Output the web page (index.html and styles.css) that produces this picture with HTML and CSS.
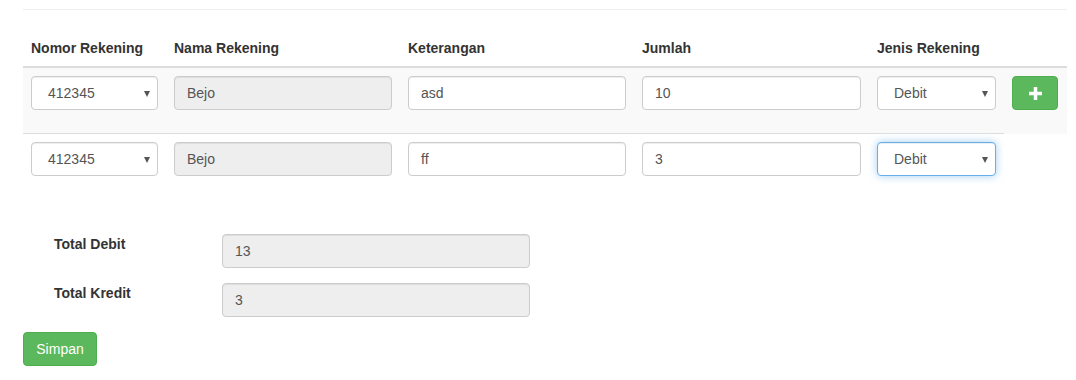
FILE: index.html
```html
<!DOCTYPE html>
<html>
<head>
<meta charset="utf-8">
<link rel="stylesheet" href="styles.css">
</head>
<body>
<div class="wrap">
  <hr class="rule">
  <table class="jt">
    <colgroup>
      <col class="c1"><col class="c2"><col class="c3"><col class="c4"><col class="c5"><col class="c6">
    </colgroup>
    <thead>
      <tr>
        <th>Nomor Rekening</th>
        <th>Nama Rekening</th>
        <th>Keterangan</th>
        <th>Jumlah</th>
        <th>Jenis Rekening</th>
        <th></th>
      </tr>
    </thead>
    <tbody>
      <tr class="striped">
        <td><div class="fg"><div class="sel">412345</div></div></td>
        <td><div class="fg"><div class="inp ro">Bejo</div></div></td>
        <td><div class="fg"><div class="inp">asd</div></div></td>
        <td><div class="fg"><div class="inp">10</div></div></td>
        <td><div class="fg"><div class="sel">Debit</div></div></td>
        <td><div class="fg"><div class="btn btn-add"><svg width="13" height="13" viewBox="0 0 13 13"><rect x="4.75" y="0" width="3.5" height="13" fill="#fff"/><rect x="0" y="4.75" width="13" height="3.5" fill="#fff"/></svg></div></div></td>
      </tr>
      <tr>
        <td><div class="fg"><div class="sel">412345</div></div></td>
        <td><div class="fg"><div class="inp ro">Bejo</div></div></td>
        <td><div class="fg"><div class="inp">ff</div></div></td>
        <td><div class="fg"><div class="inp">3</div></div></td>
        <td><div class="fg"><div class="sel focus">Debit</div></div></td>
      </tr>
    </tbody>
  </table>

  <div class="totals">
    <div class="trow">
      <label class="tlabel">Total Debit</label>
      <div class="inp ro tinp">13</div>
    </div>
    <div class="trow">
      <label class="tlabel">Total Kredit</label>
      <div class="inp ro tinp">3</div>
    </div>
  </div>
  <div class="btn btn-save">Simpan</div>
</div>
</body>
</html>
```

FILE: styles.css
```css
* { box-sizing: border-box; }
html, body { margin: 0; padding: 0; background: #fff; }
body {
  font-family: "Liberation Sans", Arial, sans-serif;
  font-size: 14px;
  line-height: 20px;
  color: #333;
}
.wrap {
  width: 1067px;
  padding-left: 23px;
}
.rule {
  margin: 9px 0 20px 0;
  border: 0;
  border-top: 1px solid #eee;
  height: 0;
}
.jt {
  width: 1044px;
  border-collapse: collapse;
  border-spacing: 0;
  table-layout: fixed;
}
.c1 { width: 143px; }
.c2 { width: 234px; }
.c3 { width: 234px; }
.c4 { width: 235px; }
.c5 { width: 135px; }
.c6 { width: 63px; }
.jt th {
  text-align: left;
  font-weight: bold;
  padding: 8px;
  line-height: 20px;
  border-bottom: 2px solid #ddd;
  vertical-align: bottom;
}
.jt td {
  padding: 8px;
  vertical-align: top;
  border-top: 1px solid #ddd;
}
.jt thead + tbody tr:first-child td { border-top: 0; }
.striped td { background: #f9f9f9; }
.fg { margin-bottom: 15px; }
.inp, .sel {
  height: 34px;
  width: 100%;
  border: 1px solid #ccc;
  border-radius: 4px;
  background: #fff;
  color: #555;
  font-size: 14px;
  line-height: 20px;
  padding: 6px 12px;
  box-shadow: inset 0 1px 1px rgba(0,0,0,.075);
  white-space: nowrap;
}
.ro { background: #eee; }
.sel {
  position: relative;
  padding-left: 16px;
}
.sel::after {
  content: "";
  position: absolute;
  right: 7px;
  top: 14px;
  border-left: 3.5px solid transparent;
  border-right: 3.5px solid transparent;
  border-top: 6px solid #555;
}
.sel.focus {
  border-color: #66afe9;
  box-shadow: inset 0 1px 1px rgba(0,0,0,.075), 0 0 8px rgba(102,175,233,.6);
}
.btn {
  display: inline-flex;
  align-items: center;
  justify-content: center;
  height: 34px;
  border-radius: 4px;
  border: 1px solid #4cae4c;
  background: #5cb85c;
  color: #fff;
  font-size: 14px;
}
.btn-add { width: 46px; }
.btn-save { width: 74px; height: 34px; }
.totals {
  margin-top: 35px;
}
.trow {
  display: flex;
  margin-bottom: 15px;
}
.tlabel {
  display: block;
  width: 199px;
  padding-left: 31px;
  font-weight: bold;
  line-height: 20px;
}
.tinp {
  width: 308px;
}
```
